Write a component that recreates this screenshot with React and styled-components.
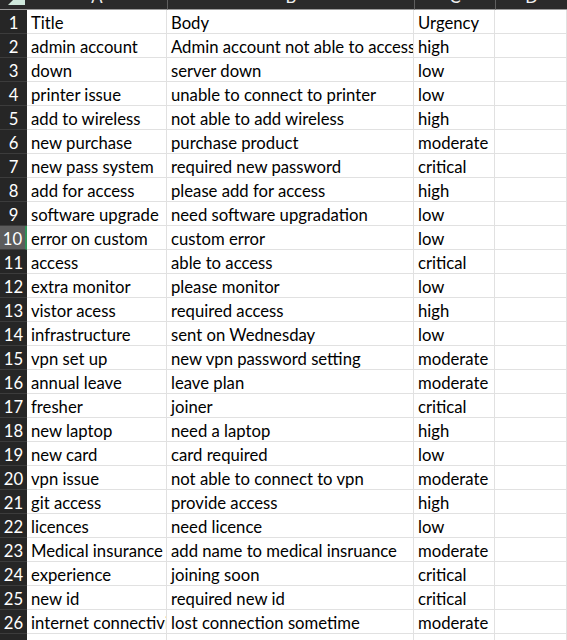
import React from 'react'
import styled, { createGlobalStyle } from 'styled-components'

const GlobalStyle = createGlobalStyle`
  html, body {
    margin: 0;
    padding: 0;
    background: #ffffff;
  }
  body {
    font-family: Lato, "Open Sans", sans-serif;
  }
`

const rows = [
  ['Title', 'Body', 'Urgency'],
  ['admin account', 'Admin account not able to access', 'high'],
  ['down', 'server down', 'low'],
  ['printer issue', 'unable to connect to printer', 'low'],
  ['add to wireless', 'not able to add wireless', 'high'],
  ['new purchase', 'purchase product', 'moderate'],
  ['new pass system', 'required new password', 'critical'],
  ['add for access', 'please add for access', 'high'],
  ['software upgrade', 'need software upgradation', 'low'],
  ['error on custom', 'custom error', 'low'],
  ['access', 'able to access', 'critical'],
  ['extra monitor', 'please monitor', 'low'],
  ['vistor acess', 'required access', 'high'],
  ['infrastructure', 'sent on Wednesday', 'low'],
  ['vpn set up', 'new vpn password setting', 'moderate'],
  ['annual leave', 'leave plan', 'moderate'],
  ['fresher', 'joiner', 'critical'],
  ['new laptop', 'need a laptop', 'high'],
  ['new card', 'card required', 'low'],
  ['vpn issue', 'not able to connect to vpn', 'moderate'],
  ['git access', 'provide access', 'high'],
  ['licences', 'need licence', 'low'],
  ['Medical insurance', 'add name to medical insruance', 'moderate'],
  ['experience', 'joining soon', 'critical'],
  ['new id', 'required new id', 'critical'],
  ['internet connectivity', 'lost connection sometime', 'moderate'],
]

const SELECTED_ROW = 10

const Sheet = styled.div`
  display: grid;
  grid-template-columns: 27px 140px 247px 81px 1fr;
  grid-auto-rows: 24px;
  grid-template-rows: 10px;
  width: 567px;
  height: 640px;
  overflow: hidden;
  font-size: 16.7px;
  color: #000;
`

const Corner = styled.div`
  position: relative;
  background: #2a2a2a;
  border-bottom: 1px solid #9b9b9b;
  overflow: hidden;

  &::after {
    content: "";
    position: absolute;
    right: 2px;
    top: -12px;
    border-style: solid;
    border-width: 0 0 17px 17px;
    border-color: transparent transparent #cfe8dc transparent;
  }
`

const ColHead = styled.div`
  display: flex;
  justify-content: center;
  align-items: flex-end;
  background: #2a2a2a;
  color: #f0f0f0;
  border-bottom: 1px solid #9b9b9b;
  border-left: ${p => (p.$first ? '0' : '1px solid #5f5f5f')};
  line-height: 1;
  padding-bottom: 3px;
  overflow: hidden;
  box-sizing: border-box;
`

const RowHead = styled.div`
  display: flex;
  align-items: center;
  justify-content: center;
  background: ${p => (p.$selected ? '#5c5c5c' : '#262626')};
  color: #ffffff;
  border-bottom: 1px solid #3c3c3c;
  border-right: ${p => (p.$selected ? '2px solid #2f8f56' : '0')};
  box-sizing: border-box;
  padding-top: 2px;
`

const Cell = styled.div`
  display: flex;
  align-items: center;
  padding: 2px 0 0 4px;
  border-right: 1px solid #e1e1e1;
  border-bottom: 1px solid #e1e1e1;
  white-space: nowrap;
  overflow: hidden;
  box-sizing: border-box;
`

export default function App() {
  return (
    <>
      <GlobalStyle />
      <Sheet>
        <Corner />
        <ColHead $first>A</ColHead>
        <ColHead>B</ColHead>
        <ColHead>C</ColHead>
        <ColHead>D</ColHead>
        {rows.map((r, i) => (
          <React.Fragment key={i}>
            <RowHead $selected={i + 1 === SELECTED_ROW}>{i + 1}</RowHead>
            <Cell>{r[0]}</Cell>
            <Cell>{r[1]}</Cell>
            <Cell>{r[2]}</Cell>
            <Cell />
          </React.Fragment>
        ))}
        <RowHead>27</RowHead>
        <Cell />
        <Cell />
        <Cell />
        <Cell />
      </Sheet>
    </>
  )
}
